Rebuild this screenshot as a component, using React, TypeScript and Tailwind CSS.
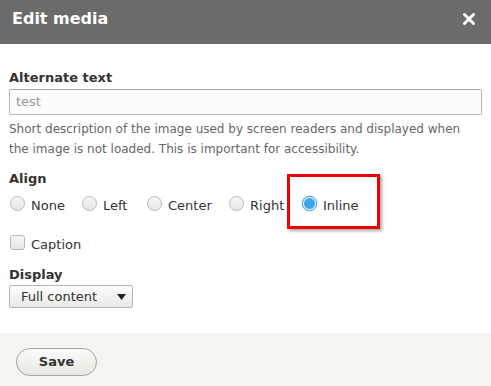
import React from "react";

const font = { fontFamily: '"DejaVu Sans", Verdana, sans-serif' };

function Radio({ label, checked }: { label: string; checked?: boolean }) {
  return (
    <label className="flex items-center">
      {checked ? (
        <span className="w-[15px] h-[15px] rounded-full border border-[#3b9de0] bg-white flex items-center justify-center shadow-[0_0_2px_#7cc0ee]">
          <span className="w-[11px] h-[11px] rounded-full bg-[#3aa7ea]" />
        </span>
      ) : (
        <span className="w-[15px] h-[15px] rounded-full border border-[#b8b8b8] bg-gradient-to-b from-[#f7f7f5] to-[#e6e6e3]" />
      )}
      <span className="ml-[6px] text-[13px] leading-[20px] text-[#333] mt-[5px]">{label}</span>
    </label>
  );
}

export default function App() {
  return (
    <div className="w-[491px] h-[386px] bg-white relative overflow-hidden" style={font}>
      <div className="h-[44px] bg-[#6b6b6b] flex justify-between px-[12px] pt-[10px]">
        <div className="text-white font-bold text-[16px] leading-[18px]">Edit media</div>
        <svg width="12" height="12" viewBox="0 0 12 12" className="mt-[3px] mr-[4px]">
          <path d="M1.5 1.5 L10.5 10.5 M10.5 1.5 L1.5 10.5" stroke="white" strokeWidth="2.8" strokeLinecap="square" />
        </svg>
      </div>

      <div className="h-[289px] px-[9px] pt-[24px]">
        <div className="text-[13px] leading-[20px] font-bold text-[#333]">Alternate text</div>
        <div className="mt-[1px] h-[26px] border border-[#b8b8b8] border-t-[#a8a8a8] rounded-[2px] bg-[#fcfcfa] px-[6px] text-[13px] leading-[24px] text-[#999]">
          test
        </div>
        <div className="mt-[4px] text-[12px] leading-[20px] text-[#666]">
          Short description of the image used by screen readers and displayed when
          the image is not loaded. This is important for accessibility.
        </div>

        <div className="mt-[10px] text-[13px] leading-[20px] font-bold text-[#333]">Align</div>
        <div className="flex items-center gap-[0px] mt-[2px] ml-[1px]">
          <div className="w-[72px]"><Radio label="None" /></div>
          <div className="w-[65px]"><Radio label="Left" /></div>
          <div className="w-[82px]"><Radio label="Center" /></div>
          <div className="w-[73px]"><Radio label="Right" /></div>
          <div><Radio label="Inline" checked /></div>
        </div>

        <div className="flex items-center mt-[14px] ml-[1px]">
          <span className="w-[15px] h-[15px] rounded-[3px] border border-[#b8b8b8] bg-gradient-to-b from-[#f7f7f5] to-[#e6e6e3]" />
          <span className="ml-[6px] text-[13px] leading-[20px] text-[#333] mt-[5px]">Caption</span>
        </div>

        <div className="mt-[10px] text-[13px] leading-[20px] font-bold text-[#333]">Display</div>
        <div className="mt-[0px] w-[124px] h-[23px] border border-[#b4b4b4] rounded-[2px] bg-gradient-to-b from-[#fefefe] to-[#e8e8e6] flex items-center pl-[11px] pr-[6px] justify-between">
          <span className="text-[13px] leading-[20px] text-[#333]">Full content</span>
          <svg width="9" height="6" viewBox="0 0 9 6" className="mr-[0px] mt-[1px]">
            <path d="M0 0 L9 0 L4.5 6 Z" fill="#222" />
          </svg>
        </div>
      </div>

      <div className="h-[53px] bg-[#f4f4f0] pt-[15px] px-[16px]">
        <button className="w-[81px] h-[28px] rounded-full border border-[#a6a6a6] bg-gradient-to-b from-[#fafaf8] to-[#e8e8e4] text-[13px] font-bold text-[#333] leading-[26px]">
          Save
        </button>
      </div>

      <div className="absolute left-[287px] top-[174px] w-[93px] h-[55px] border-[3px] border-[#ee0000] shadow-[2px_2px_3px_rgba(0,0,0,0.35)]" />
    </div>
  );
}
